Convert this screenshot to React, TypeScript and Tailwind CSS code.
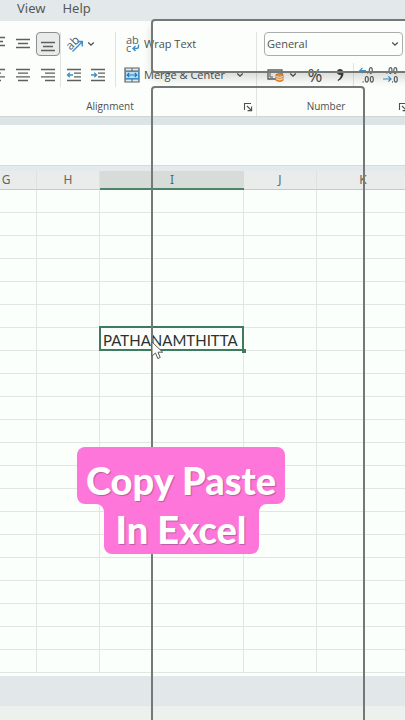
import type { ReactNode } from "react";

const rows = Array.from({ length: 21 }, (_, i) => i);
const columns = ["G", "H", "I", "J", "K"];

function Lines({ d }: { d: string }) {
  return (
    <svg width="16" height="16" viewBox="0 0 16 16" fill="none" stroke="#5c605e" strokeWidth="1.3">
      <path d={d} />
    </svg>
  );
}

function Chevron() {
  return (
    <svg width="8" height="8" viewBox="0 0 8 8" fill="none" stroke="#4c504e" strokeWidth="1.3">
      <path d="M1.2 2.6 4 5.2 6.8 2.6" />
    </svg>
  );
}

function Launcher({ label }: { label: string }) {
  return (
    <button aria-label={label} className="flex w-4 shrink-0 items-center justify-center">
      <svg width="10" height="10" viewBox="0 0 10 10" fill="none" stroke="#4c504e" strokeWidth="1.1">
        <path d="M1.5 8V1.5H8M4 4l4.5 4.5M8.6 4.6v4H4.6" />
      </svg>
    </button>
  );
}

function IconButton({ label, active, children }: { label: string; active?: boolean; children: ReactNode }) {
  return (
    <button
      aria-label={label}
      className={
        active
          ? "flex h-6 w-6 items-center justify-center rounded border border-[#8b8f8d] bg-[#e9ebea]"
          : "flex h-6 w-6 items-center justify-center"
      }
    >
      {children}
    </button>
  );
}

function Indent({ increase }: { increase?: boolean }) {
  return (
    <svg width="16" height="16" viewBox="0 0 16 16" fill="none" strokeWidth="1.3">
      <path d="M1 2.5h14M8 6.2h7M8 9.8h7M1 13.5h14" stroke="#5c605e" />
      <path
        d={increase ? "M1 8h5.5M4.3 5.8 6.6 8l-2.3 2.2" : "M7 8H1.5M3.8 5.8 1.5 8l2.3 2.2"}
        stroke="#3d8fc9"
      />
    </svg>
  );
}

function Decimal({ increase }: { increase?: boolean }) {
  return (
    <svg width="18" height="18" viewBox="0 0 18 18" fill="none" strokeWidth="1.2">
      <g stroke="#5c605e">
        {increase ? (
          <>
            <ellipse cx="12.8" cy="4.5" rx="1.5" ry="2.8" />
            <ellipse cx="8.8" cy="13.3" rx="1.5" ry="2.8" />
            <ellipse cx="13.8" cy="13.3" rx="1.5" ry="2.8" />
            <path d="M4.5 15.8h1.2M9 7h1" />
          </>
        ) : (
          <>
            <ellipse cx="8.5" cy="4.5" rx="1.5" ry="2.8" />
            <ellipse cx="13.3" cy="4.5" rx="1.5" ry="2.8" />
            <ellipse cx="13.8" cy="13.3" rx="1.5" ry="2.8" />
            <path d="M4.2 7h1.2M10 15.8h1" />
          </>
        )}
      </g>
      <path
        d={increase ? "M8 4.5H2M4.5 1.8 1.8 4.5l2.7 2.7" : "M1 13h8M6.3 10.3 9 13l-2.7 2.7"}
        stroke="#3d8fc9"
      />
    </svg>
  );
}

function Ribbon() {
  return (
    <div className="flex h-24 border-b border-[#cfd5d5] bg-[#fbfefb] pt-[11px] font-['Open_Sans',sans-serif] text-[11px] text-[#4c504e]">
      <section className="-ml-9 flex w-[292px] shrink-0 flex-col">
        <div className="flex pl-[22px]">
          <div className="grid grid-cols-3 gap-x-px gap-y-[7px]">
            <IconButton label="Top Align">
              <Lines d="M1 1.5h14M3 5.5h10M1 9.5h14" />
            </IconButton>
            <IconButton label="Middle Align">
              <Lines d="M1 3.5h14M3 7.5h10M1 11.5h14" />
            </IconButton>
            <IconButton label="Bottom Align" active>
              <Lines d="M1 6.5h14M3 10.5h10M1 14.5h14" />
            </IconButton>
            <IconButton label="Align Left">
              <Lines d="M1 2.5h14M1 6.2h10M1 9.8h14M1 13.5h10" />
            </IconButton>
            <IconButton label="Center">
              <Lines d="M1 2.5h14M3 6.2h10M1 9.8h14M3 13.5h10" />
            </IconButton>
            <IconButton label="Align Right">
              <Lines d="M1 2.5h14M5 6.2h10M1 9.8h14M5 13.5h10" />
            </IconButton>
          </div>
          <div className="flex w-[55px] flex-col gap-[7px] border-l border-[#e0e3e2] pl-px">
            <button aria-label="Orientation" className="flex h-6 items-center gap-px pl-1">
              <svg width="20" height="18" viewBox="0 0 20 18" fill="none" className="overflow-visible">
                <text
                  x="1"
                  y="13"
                  transform="rotate(-45 6 10)"
                  fontSize="12"
                  fontFamily="Open Sans, sans-serif"
                  fill="#5c605e"
                >
                  ab
                </text>
                <path d="M6.500 16.500 16 7M11.300 6.500h5v5" stroke="#3d8fc9" strokeWidth="1.400" />
              </svg>
              <Chevron />
            </button>
            <div className="flex">
              <IconButton label="Decrease Indent">
                <Indent />
              </IconButton>
              <IconButton label="Increase Indent">
                <Indent increase />
              </IconButton>
            </div>
          </div>
          <div className="flex flex-1 flex-col gap-[7px] border-l border-[#e0e3e2] pl-2">
            <button className="flex h-6 items-center gap-1">
              <svg width="16" height="18" viewBox="0 0 16 18" fill="none" className="overflow-visible">
                <g fontSize="11" fontFamily="Open Sans, sans-serif" fill="#5c605e">
                  <text x="2" y="9">ab</text>
                  <text x="2" y="17">c</text>
                </g>
                <path d="M14.500 9.500v2q0 2-2 2H9M11.500 11 9 13.500l2.500 2.500" stroke="#3d8fc9" strokeWidth="1.400" />
              </svg>
              Wrap Text
            </button>
            <button className="flex h-6 items-center gap-1">
              <svg width="16" height="16" viewBox="0 0 16 16" fill="none">
                <path d="M1 1h14v14H1z" fill="#d9edf8" stroke="#5c605e" strokeWidth="1.200" />
                <path d="M1 4h14M1 12h14M8 1v3M8 12v3" stroke="#5c605e" />
                <path d="M1.500 4.500h13v7h-13z" fill="#b8def4" stroke="#3d8fc9" />
                <path d="M3 8h10M5.200 6 3.200 8l2 2M10.800 6l2 2-2 2" stroke="#2479b5" strokeWidth="1.200" />
              </svg>
              <span className="w-[88px] text-left">Merge &amp; Center</span>
              <Chevron />
            </button>
          </div>
        </div>
        <div className="mt-2.5 flex h-5 items-center justify-end text-[10px]">
          <span className="flex-1 pl-4 text-center">Alignment</span>
          <Launcher label="Alignment Settings" />
        </div>
      </section>
      <section className="flex w-[155px] shrink-0 flex-col border-l border-[#e0e3e2]">
        <div className="flex flex-col gap-[7px] pl-[7px]">
          <div className="relative flex h-6 w-[139px] items-center">
            <select
              aria-label="Number Format"
              className="h-6 w-full appearance-none rounded border border-[#a9adab] bg-[#fbfefb] px-0.5"
            >
              <option>General</option>
            </select>
            <span className="pointer-events-none absolute right-1">
              <Chevron />
            </span>
          </div>
          <div className="flex items-center">
            <button aria-label="Accounting Format" className="flex h-6 w-[39px] items-center gap-1 pl-[3px]">
              <svg width="18" height="16" viewBox="0 0 18 16" fill="none">
                <path d="M1 3h14v9H1z" stroke="#5c605e" strokeWidth="1.300" />
                <path d="M6 5H3v5h3M8 5h4" stroke="#5c605e" />
                <path d="M9 7.500q4-2 7 0v6q-3 2-7 0z" fill="#f2a251" stroke="#d97e28" />
                <path d="M9 9.500q4 2 7 0M9 11.700q4 2 7 0" stroke="#fff1df" />
              </svg>
              <Chevron />
            </button>
            <button aria-label="Percent Style" className="flex h-6 w-6 items-center justify-center text-lg">
              %
            </button>
            <button aria-label="Comma Style" className="flex h-6 w-[25px] items-center justify-center">
              <svg width="10" height="14" viewBox="0 0 10 14">
                <path d="M5 1a3 3 0 1 0 1 5.800C5.800 9 4.500 11 2.500 12l.6 1C6.800 11.300 8.700 8.500 8.500 4.800 8.400 2.300 7 1 5 1z" fill="#3c403e" />
              </svg>
            </button>
            <div className="ml-px flex border-l border-[#e0e3e2] pl-px">
              <IconButton label="Increase Decimal">
                <Decimal increase />
              </IconButton>
              <IconButton label="Decrease Decimal">
                <Decimal />
              </IconButton>
            </div>
          </div>
        </div>
        <div className="mt-2.5 flex h-5 items-center text-[10px]">
          <span className="flex-1 text-center">Number</span>
          <Launcher label="Number Settings" />
        </div>
      </section>
    </div>
  );
}

function Sheet() {
  return (
    <table className="w-full table-fixed border-separate border-spacing-0 bg-[#fbfffb]">
      <colgroup>
        <col className="w-[37px]" />
        <col className="w-[63px]" />
        <col className="w-36" />
        <col className="w-[73px]" />
        <col />
      </colgroup>
      <thead>
        <tr className="h-[19px] bg-[#e9ecea] text-xs leading-4 text-[#626664]">
          {columns.map((name) => (
            <th
              key={name}
              className={
                name === "I"
                  ? "border-b-2 border-[#4b8468] bg-[#d8dcd9] p-0 font-normal text-[#47705d]"
                  : name === "G"
                    ? "border-r border-b border-r-[#dde1df] border-b-[#c5cac7] p-0 pr-6 font-normal"
                    : name === "K"
                      ? "border-b border-[#c5cac7] p-0 pl-1 font-normal"
                      : "border-r border-b border-r-[#dde1df] border-b-[#c5cac7] p-0 font-normal"
              }
            >
              {name}
            </th>
          ))}
        </tr>
      </thead>
      <tbody>
        {rows.map((row) => (
          <tr key={row} className="h-[23px]">
            {columns.map((name) =>
              row === 6 && name === "I" ? (
                <td key={name} className="relative p-0 pl-[3px] font-[Lato,sans-serif] text-[15px] leading-5 text-[#2d302e]">
                  PATHANAMTHITTA
                  <div className="absolute -top-0.5 right-0 bottom-0 -left-px border-2 border-[#3f7c5f]" />
                  <div className="absolute -right-0.5 -bottom-0.5 size-1 bg-[#3f7c5f]" />
                </td>
              ) : (
                <td
                  key={name}
                  className={name === "K" ? "border-b border-[#e1e6e2] p-0" : "border-r border-b border-[#e1e6e2] p-0"}
                />
              )
            )}
          </tr>
        ))}
      </tbody>
    </table>
  );
}

function Caption() {
  return (
    <div className="absolute top-[447px] left-[77px] flex flex-col items-center font-[Lato,sans-serif] text-[38px] font-black text-white text-shadow-[1px_1px_1px_#8d4a7c99]">
      <div className="h-[57px] rounded-lg bg-[#ff76da] px-[9px] leading-[66px]">Copy Paste</div>
      <div className="relative h-[50px] rounded-b-lg bg-[#ff76da] px-3 leading-[50px]">
        In Excel
        <svg className="absolute top-0 -left-2" width="8" height="8" viewBox="0 0 8 8">
          <path d="M0 0h8v8a8 8 0 0 0-8-8z" fill="#ff76da" />
        </svg>
        <svg className="absolute top-0 -right-2" width="8" height="8" viewBox="0 0 8 8">
          <path d="M8 0H0v8a8 8 0 0 1 8-8z" fill="#ff76da" />
        </svg>
      </div>
    </div>
  );
}

export default function App() {
  return (
    <div className="relative flex min-h-screen w-full flex-col overflow-hidden bg-[#edf1ed] font-['Noto_Sans',sans-serif]">
      <nav className="flex h-[21px] gap-[17px] bg-[#e3e9ea] pl-[17px] text-[13px] leading-4 text-[#555a59]">
        <a href="#view">View</a>
        <a href="#help">Help</a>
      </nav>
      <Ribbon />
      <div className="h-2 bg-[#dde4e5]" />
      <div className="h-10 bg-[#fbfffb]" />
      <div className="h-1.5 border-t border-[#d5dbdd] bg-[#e4e9ee]" />
      <Sheet />
      <div className="h-[3px] bg-[#fbfffb]" />
      <div className="h-[30px] bg-[#e2e7e9]" />

      <div className="pointer-events-none absolute top-[19px] -right-2 left-[151px] h-[54px] rounded border-2 border-[#747876] shadow-[0_6px_8px_#00000022]" />
      <div className="pointer-events-none absolute top-[86px] -bottom-2 left-[151px] w-[214px] rounded border-2 border-[#747876]" />

      <svg className="absolute top-[341px] left-[151px]" width="13" height="19" viewBox="0 0 13 19">
        <path d="M1 1v14l3.500-3 2.300 5.500 2.400-1L7 11.200h4.700z" fill="#fff" stroke="#555a57" />
      </svg>
      <Caption />
    </div>
  );
}
